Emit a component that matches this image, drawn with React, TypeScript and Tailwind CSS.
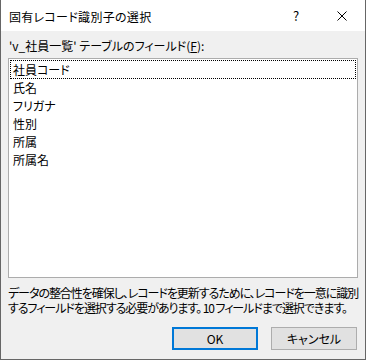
import React from 'react';

const fields = ['社員コード', '氏名', 'フリガナ', '性別', '所属', '所属名'];

function CloseIcon() {
  return (
    <svg width="10" height="10" viewBox="0 0 10 10" className="block">
      <path d="M0.5 0.5 L9.5 9.5 M9.5 0.5 L0.5 9.5" stroke="#000" strokeWidth="1" fill="none" />
    </svg>
  );
}

export default function App() {
  return (
    <div
      className="flex h-[360px] w-[366px] flex-col overflow-hidden border-x border-b border-[#666666] bg-[#f0f0f0] text-[12px] text-black"
      style={{ fontFamily: '"Noto Sans CJK JP", "Noto Sans", sans-serif', fontFeatureSettings: '"palt"' }}
    >
      {/* title bar */}
      <div className="flex h-[31px] shrink-0 items-center bg-white">
        <div className="flex-1 pl-[8px] pt-[1px] leading-[15px] tracking-[0.3px]">固有レコード識別子の選択</div>
        <div className="flex h-full w-[46px] items-center justify-center text-[13px]">?</div>
        <div className="flex h-full w-[46px] items-center justify-center">
          <CloseIcon />
        </div>
      </div>

      <div className="flex flex-1 flex-col px-[7px]">
        <div className="mt-[7px] h-[15px] leading-[15px] pl-[1px]">
          'v_社員一覧' テーブルのフィールド(<span className="underline">F</span>):
        </div>

        <div className="mt-[5px] h-[220px] border border-[#acacac] bg-white px-[1px] pt-[1px]">
          {fields.map((f, i) => (
            <div
              key={f}
              className={
                i === 0
                  ? 'flex h-[19px] items-center border border-dotted border-black pl-[2px] pt-[1px]'
                  : 'flex h-[18px] items-center pl-[3px]'
              }
            >
              {f}
            </div>
          ))}
        </div>

        <div className="mt-[7px] whitespace-nowrap leading-[15px] tracking-[-1.05px]">
          データの整合性を確保し、レコードを更新するために、レコードを一意に識別
          <br />
          するフィールドを選択する必要があります。 10 フィールドまで選択できます。
        </div>

        <div className="mt-[12px] flex justify-end gap-[13px] pr-[1px]">
          <button
            type="button"
            className="h-[23px] w-[86px] border-2 border-[#0078d7] bg-[#e1e1e1] leading-none"
          >
            OK
          </button>
          <button
            type="button"
            className="h-[23px] w-[86px] border border-[#adadad] bg-[#e1e1e1] leading-none"
          >
            キャンセル
          </button>
        </div>
      </div>
    </div>
  );
}
